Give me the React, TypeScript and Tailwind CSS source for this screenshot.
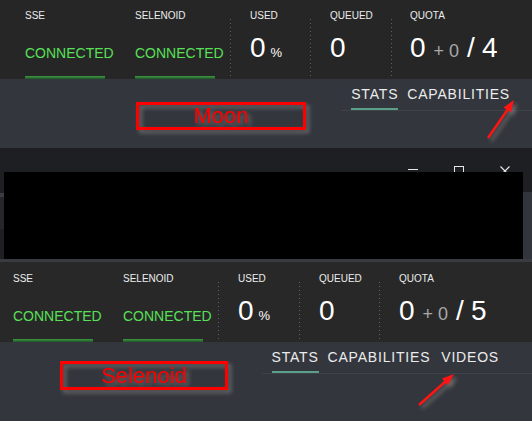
import React from "react";

type HeaderProps = {
  padLeft: string;
  padTop: string;
  height: string;
  bg: string;
  quota: string;
  usedW: string;
  queuedW: string;
  quotaPl: string;
};

function Divider() {
  return (
    <div className="mt-[9px] h-[60px] w-px shrink-0 bg-[repeating-linear-gradient(to_bottom,#5d6066_0px,#5d6066_1px,transparent_1px,transparent_4px)]" />
  );
}

function Label({ children }: { children: React.ReactNode }) {
  return <div className="text-[10px] leading-[12px] text-[#ececec]">{children}</div>;
}

function ConnCol({ label, w }: { label: string; w: string }) {
  return (
    <div className={`flex flex-col ${w} shrink-0`}>
      <Label>{label}</Label>
      <div className="mt-[23px] text-[14px] leading-[16px] text-[#58e058]">CONNECTED</div>
      <div className="mt-[15px] h-[3px] w-[80px] bg-linear-to-b from-[#3f9a45] to-[#1f5523]" />
    </div>
  );
}

function StatsHeader(p: HeaderProps) {
  return (
    <div className={`flex items-start ${p.height} ${p.bg} ${p.padLeft} ${p.padTop}`}>
      <ConnCol label="SSE" w="w-[110px]" />
      <ConnCol label="SELENOID" w="w-[95px]" />
      <Divider />
      <div className={`flex flex-col ${p.usedW} shrink-0 pl-[19px]`}>
        <Label>USED</Label>
        <div className="mt-[10px] flex items-baseline leading-[32px] text-white">
          <span className="text-[28px]">0</span>
          <span className="ml-[5px] text-[13px]">%</span>
        </div>
      </div>
      <Divider />
      <div className={`flex flex-col ${p.queuedW} shrink-0 pl-[19px]`}>
        <Label>QUEUED</Label>
        <div className="mt-[10px] flex items-baseline leading-[32px] text-white">
          <span className="text-[28px]">0</span>
        </div>
      </div>
      <Divider />
      <div className={`flex flex-col ${p.quotaPl}`}>
        <Label>QUOTA</Label>
        <div className="mt-[10px] flex items-baseline leading-[32px] text-white">
          <span className="text-[28px]">0</span>
          <span className="ml-[8px] text-[18px] text-[#a8a8a8]">+</span>
          <span className="ml-[5px] text-[18px] text-[#a8a8a8]">0</span>
          <span className="ml-[8px] text-[28px]">/</span>
          <span className="ml-[7px] text-[28px]">{p.quota}</span>
        </div>
      </div>
    </div>
  );
}

function Tab({ text, active, extra }: { text: string; active?: boolean; extra?: string }) {
  return (
    <div className={`flex flex-col ${extra ?? ""}`}>
      <div className="text-[14px] leading-[20px] tracking-[0.8px] text-[#ececec]">{text}</div>
      <div className={`mt-[4px] h-[2px] ${active ? "bg-[#5c9f88]" : "bg-transparent"}`} />
    </div>
  );
}

export default function App() {
  return (
    <div className="relative h-[421px] w-[532px] overflow-hidden bg-[#1e1f23] font-['Liberation_Sans',Arial,sans-serif]">
      <StatsHeader
        padLeft="pl-[25px]"
        padTop="pt-[10px]"
        height="h-[79px]"
        bg="bg-[#262626]"
        quota="4"
        usedW="w-[79px]"
        queuedW="w-[80px]"
        quotaPl="pl-[18px]"
      />
      <div className="flex h-[69px] justify-end bg-[#33363c]">
        <div className="flex h-[32px] gap-[9px] border-b border-[#3e4249] pl-[10px] pr-[22px] pt-[5px]">
          <Tab text="STATS" active />
          <Tab text="CAPABILITIES" />
        </div>
      </div>
      <div className="flex h-[111px] flex-col bg-[#1e1f23]">
        <div className="flex h-[44px] items-start justify-end gap-[36px] pr-[22px] pt-[18px]">
          <div className="mt-[3px] h-[1px] w-[10px] bg-[#e8e8e8]" />
          <div className="h-[10px] w-[10px] border border-[#e8e8e8]" />
          <svg width="10" height="10" viewBox="0 0 10 10" className="block">
            <path d="M0.5 0.5 L9.5 9.5 M9.5 0.5 L0.5 9.5" stroke="#e8e8e8" strokeWidth="1.1" />
          </svg>
        </div>
        <div className="flex flex-1">
          <div className="flex flex-1 flex-col">
            <div className="h-[1px] bg-[#1e1f23]" />
            <div className="h-[4px] bg-[#3a3c42]" />
            <div className="h-[32px] bg-[#26272b]" />
            <div className="flex-1 bg-[#1e1f23]" />
          </div>
          <div className="flex w-[9px] flex-col">
            <div className="flex-1 bg-[#32353b]" />
          </div>
        </div>
      </div>
      <div className="h-[3px] bg-[#3a3b40]" />
      <StatsHeader
        padLeft="pl-[13px]"
        padTop="pt-[11px]"
        height="h-[80px]"
        bg="bg-[#282828]"
        quota="5"
        usedW="w-[80px]"
        queuedW="w-[79px]"
        quotaPl="pl-[19px]"
      />
      <div className="flex h-[79px] justify-end bg-[#33363c]">
        <div className="flex h-[32px] gap-[9px] border-b border-[#3e4249] pl-[10px] pr-[33px] pt-[5px]">
          <Tab text="STATS" active />
          <Tab text="CAPABILITIES" />
          <Tab text="VIDEOS" extra="ml-[2px]" />
        </div>
      </div>

      {/* redaction */}
      <div className="absolute left-[4px] top-[172px] h-[87px] w-[519px] bg-black" />

      {/* annotations */}
      <div className="absolute left-[136px] top-[102px] flex h-[28px] w-[170px] items-center justify-center border-[3px] border-[#ff0000] text-[22px] leading-none text-[#ff0000] [filter:drop-shadow(3px_3px_2px_rgba(120,120,120,0.85))]">
        Moon
      </div>
      <div className="absolute left-[60px] top-[361px] flex h-[29px] w-[168px] items-center justify-center border-[3px] border-[#ff0000] text-[22px] leading-none text-[#ff0000] [filter:drop-shadow(3px_3px_2px_rgba(120,120,120,0.85))]">
        Selenoid
      </div>
      <svg
        width="532"
        height="421"
        viewBox="0 0 532 421"
        className="pointer-events-none absolute left-0 top-0 [filter:drop-shadow(3px_3px_2px_rgba(120,120,120,0.85))]"
      >
        <line x1="488" y1="138" x2="508" y2="109" stroke="#ff1414" strokeWidth="2.4" />
        <polygon points="514,100 511,112.5 503.5,107.4" fill="#ff1414" />
        <line x1="419" y1="405" x2="446" y2="381" stroke="#ff1414" strokeWidth="2.4" />
        <polygon points="454,374 448,385.3 442,378.5" fill="#ff1414" />
      </svg>
    </div>
  );
}
